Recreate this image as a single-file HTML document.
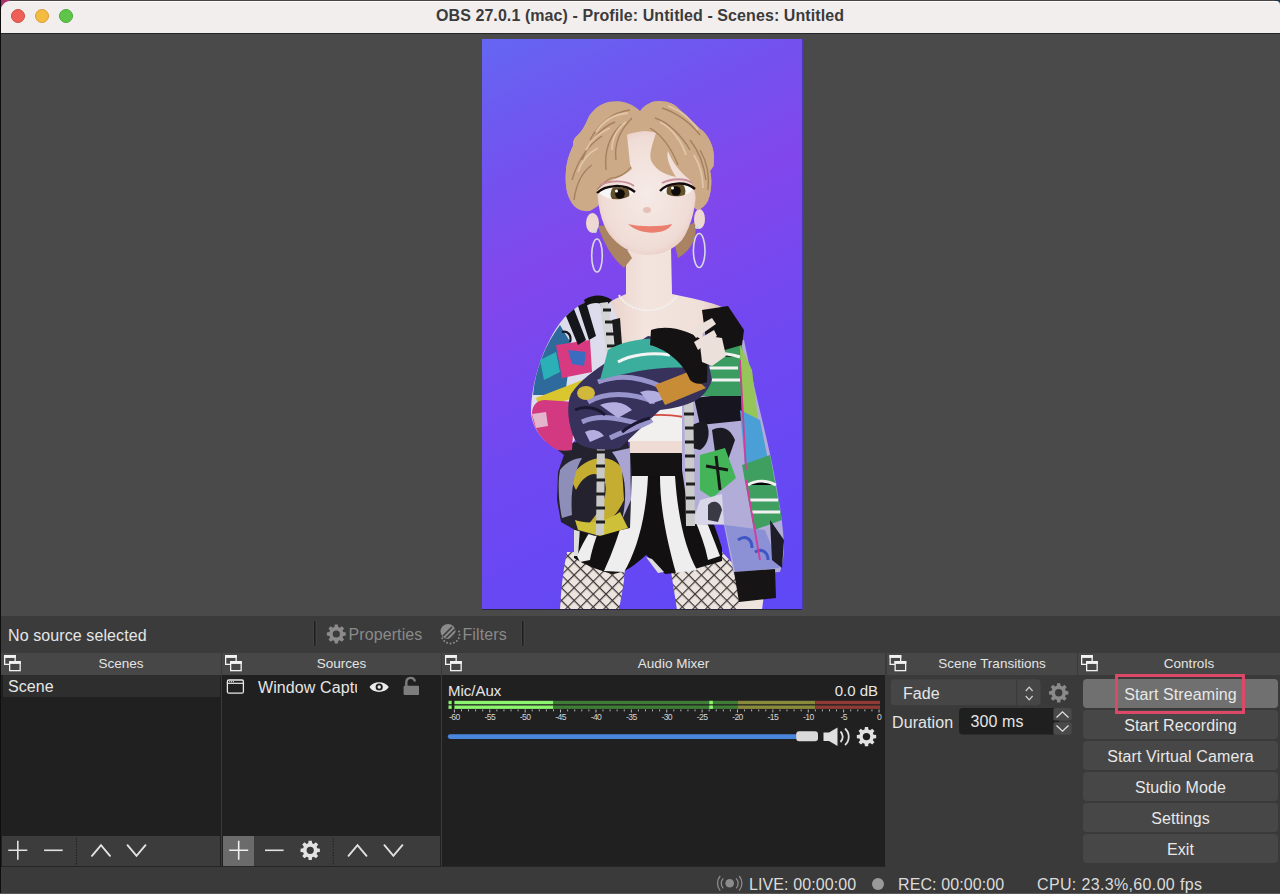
<!DOCTYPE html>
<html><head><meta charset="utf-8">
<style>
*{box-sizing:border-box;margin:0;padding:0}
html,body{width:1280px;height:894px;overflow:hidden;background:#3a3a3a}
body{position:relative;font-family:"Liberation Sans",sans-serif;color:#e6e6e6}
.a{position:absolute}
.t{position:absolute;white-space:nowrap;font-size:16px;letter-spacing:0.1px;line-height:1}
#titlebar{left:1px;top:1px;width:1279px;height:33px;background:#f3eeee;border-top:1px solid #fdfbfb;border-bottom:1px solid #262626;border-top-left-radius:9px;border-top-right-radius:4px}
#title{left:0;width:1280px;top:8px;text-align:center;font-weight:bold;color:#3b3b3b;font-size:16px;letter-spacing:0.08px}
.dot{position:absolute;width:14px;height:14px;border-radius:50%;top:9px}
#main{left:0;top:34px;width:1280px;height:582px;background:#4a4a4a}
#ctx{left:0;top:616px;width:1280px;height:37px;background:#3b3b3b}
.hdr{position:absolute;top:653px;height:22px;background:#474747}
.hdr .ht{position:absolute;left:20px;right:0;top:4px;text-align:center;font-size:13.5px;letter-spacing:0px;color:#e4e4e4;line-height:1}
.list{position:absolute;top:675px;background:#202020}
.tb{position:absolute;top:836px;height:30px;background:#3c3c3c}
.btn{position:absolute;left:1083px;width:195px;height:29px;border-radius:4px;background:#474747;text-align:center;font-size:16px;letter-spacing:0.1px;line-height:29px;padding-top:1px;color:#e8e8e8}
</style></head><body>
<div class="a" style="left:0;top:0;width:1280px;height:1px;background:#4a4646"></div>
<div class="a" style="left:0;top:0;width:10px;height:10px;background:#a8336a"></div>
<div class="a" style="left:1275px;top:0;width:5px;height:5px;background:#1d3a4a"></div>
<div id="titlebar" class="a"></div>
<div class="dot" style="left:11px;background:#ee5f57;border:0.5px solid #d24c44"></div>
<div class="dot" style="left:34.5px;background:#f3bb40;border:0.5px solid #d8a032"></div>
<div class="dot" style="left:58.5px;background:#5ec54a;border:0.5px solid #4aa83b"></div>
<div id="title" class="t">OBS 27.0.1 (mac) - Profile: Untitled - Scenes: Untitled</div>

<div id="main" class="a"></div>
<div id="preview"></div><svg class="a" style="left:482px;top:39px" width="321" height="571" viewBox="482 39 321 571">
<defs>
<linearGradient id="bg" x1="482" y1="39" x2="758" y2="631" gradientUnits="userSpaceOnUse">
<stop offset="0" stop-color="#6466f2"/>
<stop offset="0.2" stop-color="#7352ef"/>
<stop offset="0.36" stop-color="#8147ec"/>
<stop offset="0.6" stop-color="#7048f1"/>
<stop offset="1" stop-color="#5e48f6"/>
</linearGradient>
<pattern id="net" width="9" height="9" patternUnits="userSpaceOnUse" patternTransform="rotate(45) translate(2 0)">
<rect width="9" height="9" fill="#ece4df"/>
<path d="M0 0.6H9M0.6 0V9" stroke="#3e3636" stroke-width="1.2"/>
</pattern>
<radialGradient id="face" cx="0.5" cy="0.5" r="0.6">
<stop offset="0" stop-color="#f6ebe7"/><stop offset="0.75" stop-color="#f0dcd6"/><stop offset="1" stop-color="#e2c2b8"/>
</radialGradient>
<linearGradient id="neck" x1="0" y1="0" x2="1" y2="0">
<stop offset="0" stop-color="#e9d3cb"/><stop offset="0.3" stop-color="#f3e4de"/><stop offset="0.8" stop-color="#f1e0da"/><stop offset="1" stop-color="#dcc0b6"/>
</linearGradient>
<clipPath id="hc"><path d="M640 111 C645 104 652 101 660 101 C668 101 675 104 680 110 C688 116 696 126 703 131 C710 138 714 148 714 158 L713.5 166 L710 171 C712 178 712 190 708 201 C705 206 702 209 697 210 L697 260 L590 260 L590 211 C580 212 574 208 570 200 C566 192 565 182 566 170 C567 160 570 152 573 146 C573 141 574 138 577 136 C582 131 585 126 588 118 C592 110 600 104 608 102 C618 100 630 101 640 111Z"/></clipPath>
</defs>
<rect x="482" y="39" width="321" height="571" fill="url(#bg)"/>
<!-- legs -->
<path d="M567 552 L626 552 L624 580 C622 595 620 603 619 610 L560 610 C561 590 563 570 567 552Z" fill="url(#net)"/>
<path d="M668 552 L722 552 L734 565 L740 580 L745 610 L677 610 C674 590 671 572 668 552Z" fill="url(#net)"/>
<path d="M738 590 L764 594 L762 610 L740 610Z" fill="#eee4de"/>
<!-- shorts -->
<path d="M630 452 L681 452 L690 478 C705 500 715 525 722 548 L722 561 C700 568 680 573 665 574 C658 566 652 560 646 555 C635 565 625 573 612 574 C598 570 585 565 574 558 L574 523 C585 505 605 485 630 476Z" fill="#121010"/>
<path d="M631 476 L648 476 C646 520 636 552 624 572 L604 571 C616 545 628 510 631 476Z" fill="#eeeeee"/>
<path d="M660 476 L675 476 C678 520 686 550 697 570 L676 573 C668 545 660 510 660 476Z" fill="#eeeeee"/>
<path d="M595 525 L604 513 C599 530 592 548 590 560 L580 562 L577 556 C582 545 587 535 595 525Z" fill="#eeeeee"/>
<path d="M694 518 L706 520 C710 530 716 545 720 556 L708 560 C705 545 700 532 694 518Z" fill="#eeeeee"/>
<path d="M574 530 L580 528 L578 556 L574 556Z" fill="#dddddd"/>
<path d="M646 557 L652 559 L664 572 L658 573Z" fill="#dcdcdc"/>
<rect x="630" y="452" width="51" height="24" fill="#141212"/>
<!-- neck / chest skin -->
<path d="M626 250 L671 248 L672 294 C690 298 712 302 724 308 L720 345 L700 372 L650 372 L622 355 L610 302 C616 298 622 296 626 294Z" fill="url(#neck)"/>
<!-- crop top & midriff -->
<rect x="628" y="404" width="60" height="38" fill="#f2efef"/>
<path d="M640 418 C650 414 665 414 684 417" stroke="#d44a40" stroke-width="2" fill="none"/>
<rect x="630" y="441" width="56" height="12" fill="#eedcd4"/>
<!-- jacket left body lower -->
<path d="M553 446 L600 438 L628 440 L632 470 L630 528 L595 536 L575 530 L561 522 L557 500 L558 472 L564 455Z" fill="#24222e"/>
<path d="M570 478 C585 455 610 452 622 468 L624 500 C615 520 600 530 585 528 C600 512 610 495 604 480 C598 470 585 472 576 490Z" fill="#c4ad30"/>
<path d="M560 470 C566 462 575 458 582 458 C575 470 570 490 572 515 L562 518 C558 500 558 480 560 470Z" fill="#8d8fb8"/>
<path d="M612 452 L630 448 L631 500 L622 520 C628 495 626 470 612 452Z" fill="#a9a4d2"/>
<path d="M575 520 C590 525 605 522 620 512 L628 528 L600 536 L578 530Z" fill="#cfc03a"/>
<!-- jacket left sleeve -->
<path d="M589 301 L609 298 L622 330 L610 385 L575 440 C566 452 558 452 553 446 C540 440 532 425 531 413 C531 380 545 340 564 318 C572 310 580 304 589 301Z" fill="#dcdcec"/>
<path d="M533 395 C535 370 545 345 560 325 L572 345 L565 395 Z" fill="#2f6a9c"/>
<path d="M540 360 L556 352 L560 372 L544 380Z" fill="#2bb0b8"/>
<path d="M556 345 L590 340 L592 372 L562 378Z" fill="#d83a82"/>
<path d="M568 350 L586 352 L584 366 L572 364Z" fill="#3a6cc0"/>
<path d="M536 398 L590 377 L594 390 L540 410Z" fill="#d9c62e"/>
<path d="M532 412 C533 404 538 400 545 400 L575 402 L572 450 C562 452 556 450 551 446 C540 438 532 426 532 412Z" fill="#d23981"/>
<path d="M532 414 L546 412 L548 426 L536 428Z" fill="#e4b3cc"/>
<path d="M566 316 L574 309 L586 340 L578 345Z M578 306 L586 302 L596 336 L589 340Z M600 300 L606 299 L612 335 L605 337Z" fill="#15151c"/>
<path d="M562 332 C568 330 572 336 570 342" stroke="#15151c" stroke-width="2.2" fill="none"/>
<path d="M584 300 C592 294 604 294 612 300 L606 306 C600 302 592 302 586 306Z" fill="#141414"/>
<!-- drawstrings -->
<path d="M600 303 L608 302 L618 380 L610 382Z" fill="#d4d4d4"/>
<path d="M603 310 L611 310 M605 322 L613 322 M606 334 L614 334 M607 346 L615 346 M608 358 L616 358 M609 370 L617 370" stroke="#1e1e1e" stroke-width="3"/>
<path d="M612 320 L620 318 L622 345 L615 350Z" fill="#1a1a1a"/>
<path d="M597 440 L605 440 L604 535 L596 535Z" fill="#c9c9c9"/>
<path d="M596 452 H605 M596 466 H605 M596 480 H605 M596 494 H605 M596 508 H605 M596 522 H605" stroke="#1e1e1e" stroke-width="3"/>
<!-- jacket right -->
<path d="M703 330 L744 340 C750 370 760 410 768 445 C776 480 783 520 784 545 C784 558 782 566 780 572 L734 575 L724 525 L690 524 L682 470 L682 400 L700 372Z" fill="#b1acd8"/>
<path d="M694 398 L745 392 L748 420 L700 425Z" fill="#171520"/>
<path d="M698 345 L742 345 L746 396 L702 396Z" fill="#3b9c62"/>
<path d="M706 356 C716 352 728 353 740 357 M708 368 H738 M710 380 H740" stroke="#f2f2f2" stroke-width="3"/>
<path d="M692 425 L705 420 C712 432 708 445 700 450 L692 448Z" fill="#1b1a22"/>
<path d="M712 430 C722 425 730 428 735 440 L728 460 L715 452Z" fill="#1b1a22"/>
<path d="M700 455 L725 448 L736 478 L712 498 L700 490Z" fill="#43b558"/>
<path d="M706 466 L728 470 M716 456 L720 490" stroke="#171717" stroke-width="3"/>
<path d="M700 500 L722 494 L724 524 L692 524Z" fill="#d9d6e8"/>
<path d="M708 505 C712 500 720 500 722 510 L718 522 L708 520Z" fill="#3a3a44"/>
<path d="M740 345 L752 370 L758 420 L742 420Z" fill="#96c65a"/>
<path d="M740 410 L760 420 L768 460 L745 465Z" fill="#4aa0d6"/>
<path d="M742 465 L770 455 L782 520 L754 530Z" fill="#3e9f60"/>
<path d="M748 485 C756 480 766 480 776 485 M750 500 H778 M752 512 H780" stroke="#f2f2f2" stroke-width="2.8"/>
<path d="M725 525 L765 530 L780 568 L735 572Z" fill="#8c90d4"/>
<path d="M738 540 C745 535 752 538 752 548 M755 552 C762 548 768 552 768 560" stroke="#3f56c6" stroke-width="3" fill="none"/>
<path d="M770 520 L784 540 L782 568 L772 560Z" fill="#1e1c26"/>
<path d="M740 360 L746 470 M746 480 L760 560" stroke="#d33c9a" stroke-width="1.8"/>
<path d="M684 392 L693 392 L695 526 L686 526Z" fill="#cbcbcb"/>
<path d="M684 400 H694 M684 414 H694 M685 428 H695 M685 442 H695 M685 456 H695 M685 470 H695 M686 484 H695 M686 498 H695 M686 512 H695" stroke="#1e1e1e" stroke-width="3"/>
<!-- arm across (dark purple) -->
<path d="M571 394 C580 380 595 370 610 360 L648 336 L705 345 L712 380 C705 400 690 406 660 410 L620 448 C600 452 580 448 575 440 C568 425 566 405 571 394Z" fill="#37325c"/>
<path d="M588 402 C605 392 630 392 655 402 M582 422 C598 414 618 418 640 424 M598 382 C618 374 638 376 660 386 M610 438 C625 430 640 428 652 420" stroke="#9894cc" stroke-width="5" fill="none"/>
<path d="M600 405 C612 400 625 402 632 410 L618 418 Z M640 392 C650 388 662 392 668 398 L650 404Z M585 432 C592 428 600 430 604 436 L590 442Z" fill="#b2aee0"/>
<path d="M575 410 C585 405 598 408 605 415 M622 432 C632 424 642 420 650 418" stroke="#1a1830" stroke-width="3" fill="none"/>
<path d="M608 350 C628 338 660 335 690 343 L688 368 C660 366 630 372 600 380Z" fill="#3cae9e"/>
<path d="M618 362 C630 355 650 352 670 355" stroke="#f4f4f4" stroke-width="3" fill="none"/>
<path d="M655 385 L688 372 L706 388 L665 405Z" fill="#c88c36"/>
<ellipse cx="586" cy="393" rx="9" ry="7" fill="#d2b83a"/>
<!-- black cuff -->
<path d="M651 330 C668 324 690 330 708 344 L707 382 C700 385 694 384 690 380 C684 364 668 350 650 345Z" fill="#141212"/>
<!-- black strap right + hand -->
<path d="M702 310 L728 306 L744 330 L742 345 L718 352 L706 340Z" fill="#141212"/>
<path d="M700 345 L708 336 L722 338 L726 356 L712 366 L702 362Z" fill="#ece0da"/><path d="M690 330 L712 318 L716 324 L696 338Z M694 342 L714 330 L717 336 L698 350Z" fill="#ece0da"/>
<!-- bottom right cuff -->
<path d="M734 572 L775 569 L776 598 L739 602Z" fill="#161414"/>
<!-- hair back lower -->
<path d="M598 226 C604 244 612 258 624 268 L632 258 L612 225Z" fill="#a98362"/>
<path d="M672 234 L695 222 C698 236 692 250 678 258Z" fill="#a98362"/>
<!-- ears -->
<ellipse cx="592.5" cy="223" rx="6.5" ry="10" fill="#edd9d2"/>
<ellipse cx="699.5" cy="219" rx="5.5" ry="10" fill="#edd9d2"/>
<!-- hair blob -->
<path d="M640 111 C645 104 652 101 660 101 C668 101 675 104 680 110 C688 116 696 126 703 131 C710 138 714 148 714 158 L713.5 166 L710 171 C712 178 712 190 708 201 C705 206 702 209 697 210 L660 180 L620 170 L598 206 L590 211 C580 212 574 208 570 200 C566 192 565 182 566 170 C567 160 570 152 573 146 C573 141 574 138 577 136 C582 131 585 126 588 118 C592 110 600 104 608 102 C618 100 630 101 640 111Z" fill="#cca987"/>
<!-- face -->
<path d="M597 180 C598 150 620 132 645 131 C670 132 692 150 696 180 C697 205 692 225 682 240 C672 251 660 255 646 255 C632 254 618 246 609 234 C601 222 597 205 597 180Z" fill="url(#face)"/>
<g clip-path="url(#hc)">
<!-- bangs -->
<path d="M560 120 L627 130 L627 135 L630 164 L632 169 C625 175 618 178 612 180 C605 184 600 187 597 190 L580 205 L560 190Z" fill="#cca987"/>
<path d="M656 133 C652 145 649 155 651 160 C654 168 662 174 676 177 C669 166 666 157 668 151 C672 162 680 172 690 180 C694 188 696 195 696 200 L716 196 L716 110 L650 100Z" fill="#cca987"/>
<path d="M590 140 C598 125 612 112 630 110 M582 160 C590 140 600 128 615 122 M572 180 C578 160 588 145 602 136 M574 200 C576 185 582 172 592 165 M616 160 C614 145 620 130 632 118 M606 170 C604 150 610 135 622 124 M662 108 C675 112 690 122 700 135 M655 118 C668 122 682 136 690 150 M650 128 C662 135 672 150 678 165 M690 140 C698 150 704 165 706 180 M700 150 C706 160 710 172 708 190" stroke="#a5805f" stroke-width="1.4" fill="none"/>
<path d="M596 132 C604 120 615 114 628 113 M586 150 C592 138 600 132 610 128 M578 172 C582 160 590 152 598 148 M668 106 C680 110 692 120 698 130 M660 122 C672 128 682 142 686 155 M694 155 C700 165 703 175 703 188 M612 150 C612 138 618 128 626 122" stroke="#e0c6a6" stroke-width="1.8" fill="none"/>
<path d="M631 167 C626 174 618 178 611 178 C604 182 600 186 597 190" stroke="#a5805f" stroke-width="1.2" fill="none"/>
</g>
<!-- eyes -->
<clipPath id="e1"><path d="M599 193 C606 186 624 185 634 192 C626 201 610 202 599 193Z"/></clipPath>
<clipPath id="e2"><path d="M661 190 C669 183 686 182 693 189 C686 198 670 199 661 190Z"/></clipPath>
<path d="M599 193 C606 186 624 185 634 192 C626 201 610 202 599 193Z" fill="#f6f6f6"/>
<g clip-path="url(#e1)"><circle cx="620" cy="194" r="9.5" fill="#65502c"/><circle cx="620" cy="194" r="4.8" fill="#0e0b08"/></g>
<circle cx="616.5" cy="191" r="1.5" fill="#fff"/>
<path d="M597 193 C605 185 624 183 635 192" stroke="#140c0c" stroke-width="2.4" fill="none"/>
<path d="M661 190 C669 183 686 182 693 189 C686 198 670 199 661 190Z" fill="#f6f6f6"/>
<g clip-path="url(#e2)"><circle cx="676" cy="191" r="9.5" fill="#65502c"/><circle cx="676" cy="191" r="4.8" fill="#0e0b08"/></g>
<circle cx="672.5" cy="188" r="1.5" fill="#fff"/>
<path d="M660 191 C668 182 686 181 695 189" stroke="#140c0c" stroke-width="2.4" fill="none"/>
<path d="M600 185 C610 180 626 180 634 186 M662 183 C672 178 686 178 692 183" stroke="#c98e9c" stroke-width="1.8" fill="none"/>
<!-- nose mouth -->
<ellipse cx="647" cy="210" rx="4" ry="3" fill="#e6c0b6"/>
<path d="M628 224 C640 227 660 227 672 224 C667 235 640 236 628 224Z" fill="#ea7f70"/>
<!-- earrings -->
<ellipse cx="597" cy="255.5" rx="5.3" ry="16.5" stroke="#d8d8e2" stroke-width="1.6" fill="none"/>
<ellipse cx="699.2" cy="250.5" rx="5.8" ry="17" stroke="#d8d8e2" stroke-width="1.6" fill="none"/>
<circle cx="595" cy="231" r="2" fill="#cfe0dc"/><circle cx="697" cy="227" r="2" fill="#cfe0dc"/>
<!-- necklace -->
<path d="M619 295 C628 312 660 318 677 296" stroke="#f2f2f2" stroke-width="2" stroke-dasharray="2 1" fill="none"/>
<rect x="482" y="609" width="321" height="1.2" fill="#2a2640"/>
<rect x="802" y="39" width="1" height="571" fill="#4c3cb4"/>
</svg>



<div id="ctx" class="a"></div>
<div class="t" style="left:8px;top:628px;color:#e6e6e6">No source selected</div>
<div class="t" style="left:348.5px;top:627px;color:#8a8a8a">Properties</div>
<div class="t" style="left:462.5px;top:627px;color:#8a8a8a">Filters</div>

<!-- headers -->
<div class="hdr" style="left:1px;width:220px"><div class="ht">Scenes</div></div>
<div class="hdr" style="left:222px;width:219px"><div class="ht">Sources</div></div>
<div class="hdr" style="left:442px;width:443px"><div class="ht">Audio Mixer</div></div>
<div class="hdr" style="left:887px;width:190px"><div class="ht">Scene Transitions</div></div>
<div class="hdr" style="left:1078px;width:202px"><div class="ht">Controls</div></div>

<!-- lists -->
<div class="list" style="left:1px;width:220px;height:191px"></div>
<div class="a" style="left:3px;top:675px;width:217px;height:22px;background:#2e2e2e"></div>
<div class="t" style="left:8px;top:679px">Scene</div>
<div class="tb" style="left:2px;width:218px"></div>

<div class="list" style="left:222px;width:219px;height:191px"></div>
<div class="t" style="left:258px;top:680px;width:99px;overflow:hidden">Window Capture</div>
<div class="tb" style="left:223px;width:217px"></div>
<div class="a" style="left:223px;top:836px;width:31px;height:30px;background:#6b6b6b"></div>

<div class="list" style="left:442px;width:443px;height:191px"></div>
<div class="t" style="left:448px;top:683px;font-size:15px;letter-spacing:0px">Mic/Aux</div>
<div class="t" style="left:800px;width:78px;text-align:right;top:683px;font-size:15px;letter-spacing:0px">0.0 dB</div>

<div class="a" style="left:887px;top:675px;width:190px;height:191px;background:#3a3a3a"></div>
<div class="a" style="left:1078px;top:675px;width:202px;height:191px;background:#3a3a3a"></div>

<div class="btn" style="top:679px;background:#707070">Start Streaming</div>
<!--ST-->
<div class="btn" style="top:710px">Start Recording</div>
<div class="btn" style="top:741px">Start Virtual Camera</div>
<div class="btn" style="top:772px">Studio Mode</div>
<div class="btn" style="top:803px">Settings</div>
<div class="btn" style="top:834px">Exit</div>
<div class="a" style="left:1115px;top:674px;width:130px;height:40px;border:3px solid #db4868"></div>

<div class="a" style="left:1px;top:866px;width:885px;height:1px;background:#262626"></div>
<div class="a" style="left:0;top:0;width:1px;height:894px;background:#0e0e0e"></div>
<div class="a" style="left:0;top:893px;width:1280px;height:1px;background:#575757"></div>
<!-- status -->
<div class="t" style="left:749px;top:877px;color:#dcdcdc">LIVE: 00:00:00</div>
<div class="a" style="left:872px;top:878px;width:12px;height:12px;border-radius:50%;background:#9a9a9a"></div>
<div class="t" style="left:898px;top:877px;color:#dcdcdc;letter-spacing:0.1px">REC: 00:00:00</div>
<div class="t" style="left:1037px;top:877px;color:#dcdcdc;letter-spacing:0.35px">CPU: 23.3%,60.00 fps</div>
<svg class="a" style="left:0;top:0;pointer-events:none" width="1280" height="894" viewBox="0 0 1280 894">
<g fill="none" stroke="#f2f2f2" stroke-width="1.3"><rect x="4.65" y="655.65" width="10.5" height="8.7"/><rect x="4.65" y="655.65" width="10.5" height="1.6" fill="#f2f2f2"/><rect x="9.65" y="661.65" width="10.5" height="9" fill="#474747"/><rect x="9.65" y="661.65" width="10.5" height="1.6" fill="#f2f2f2"/></g>
<g fill="none" stroke="#f2f2f2" stroke-width="1.3"><rect x="225.65" y="655.65" width="10.5" height="8.7"/><rect x="225.65" y="655.65" width="10.5" height="1.6" fill="#f2f2f2"/><rect x="230.65" y="661.65" width="10.5" height="9" fill="#474747"/><rect x="230.65" y="661.65" width="10.5" height="1.6" fill="#f2f2f2"/></g>
<g fill="none" stroke="#f2f2f2" stroke-width="1.3"><rect x="445.65" y="655.65" width="10.5" height="8.7"/><rect x="445.65" y="655.65" width="10.5" height="1.6" fill="#f2f2f2"/><rect x="450.65" y="661.65" width="10.5" height="9" fill="#474747"/><rect x="450.65" y="661.65" width="10.5" height="1.6" fill="#f2f2f2"/></g>
<g fill="none" stroke="#f2f2f2" stroke-width="1.3"><rect x="890.15" y="655.65" width="10.5" height="8.7"/><rect x="890.15" y="655.65" width="10.5" height="1.6" fill="#f2f2f2"/><rect x="895.15" y="661.65" width="10.5" height="9" fill="#474747"/><rect x="895.15" y="661.65" width="10.5" height="1.6" fill="#f2f2f2"/></g>
<g fill="none" stroke="#f2f2f2" stroke-width="1.3"><rect x="1081.65" y="655.65" width="10.5" height="8.7"/><rect x="1081.65" y="655.65" width="10.5" height="1.6" fill="#f2f2f2"/><rect x="1086.65" y="661.65" width="10.5" height="9" fill="#474747"/><rect x="1086.65" y="661.65" width="10.5" height="1.6" fill="#f2f2f2"/></g>
<rect x="313.5" y="620.5" width="2.5" height="26" rx="1" fill="#1e1e1e" stroke="#545454" stroke-width="0.6"/>
<rect x="521.5" y="620.5" width="2.5" height="26" rx="1" fill="#1e1e1e" stroke="#545454" stroke-width="0.6"/>
<path d="M343.24 632.08 L345.77 632.45 L345.77 635.55 L343.24 635.92 L342.56 637.55 L344.09 639.60 L341.90 641.79 L339.85 640.26 L338.22 640.94 L337.85 643.47 L334.75 643.47 L334.38 640.94 L332.75 640.26 L330.70 641.79 L328.51 639.60 L330.04 637.55 L329.36 635.92 L326.83 635.55 L326.83 632.45 L329.36 632.08 L330.04 630.45 L328.51 628.40 L330.70 626.21 L332.75 627.74 L334.38 627.06 L334.75 624.53 L337.85 624.53 L338.22 627.06 L339.85 627.74 L341.90 626.21 L344.09 628.40 L342.56 630.45Z" fill="#8b8b8b"/><circle cx="336.3" cy="634" r="3.6" fill="#3b3b3b"/>
<g><circle cx="448" cy="631.5" r="7.5" fill="#8b8b8b"/><path d="M443 636 L452 627 M446 638 L455 629 M449 640 L457 632" stroke="#3b3b3b" stroke-width="1.6"/></g>
<circle cx="458.96" cy="631.42" r="1" fill="#8b8b8b"/>
<circle cx="459.49" cy="634.81" r="1" fill="#8b8b8b"/>
<circle cx="458.72" cy="638.16" r="1" fill="#8b8b8b"/>
<circle cx="456.75" cy="640.97" r="1" fill="#8b8b8b"/>
<circle cx="453.87" cy="642.84" r="1" fill="#8b8b8b"/>
<circle cx="450.50" cy="643.50" r="1" fill="#8b8b8b"/>
<circle cx="447.13" cy="642.84" r="1" fill="#8b8b8b"/>
<circle cx="444.25" cy="640.97" r="1" fill="#8b8b8b"/>
<circle cx="442.28" cy="638.16" r="1" fill="#8b8b8b"/>
<rect x="227.4" y="680" width="16" height="13.2" rx="1.5" fill="none" stroke="#e8e8e8" stroke-width="1.3"/><path d="M227.4 683.3 H243.4" stroke="#e8e8e8" stroke-width="1.2"/><circle cx="229.8" cy="681.7" r="0.6" fill="#e8e8e8"/><circle cx="231.6" cy="681.7" r="0.6" fill="#e8e8e8"/><circle cx="233.4" cy="681.7" r="0.6" fill="#e8e8e8"/>
<path d="M369.5 687 C373 680.5 385 680.5 388.8 687 C385 693.5 373 693.5 369.5 687Z" fill="#ececec"/><circle cx="379.2" cy="687" r="3.6" fill="#1e1e1e"/><circle cx="379.2" cy="687" r="1.7" fill="#ececec"/>
<rect x="403.6" y="685.7" width="15.4" height="9.3" rx="1" fill="#7d7d7d"/><path d="M406.3 686 V682.5 C406.3 676.5 414.8 676.5 414.8 681.5" fill="none" stroke="#7d7d7d" stroke-width="2.4"/>
<path d="M8.3 850.3 H27.3 M17.8 840.8 V859.8" stroke="#e2e2e2" stroke-width="1.6"/>
<path d="M44.099999999999994 850.3 H62.7" stroke="#e2e2e2" stroke-width="1.6"/>
<path d="M76.5 838 V865" stroke="#1a1a1a" stroke-width="1" stroke-dasharray="1.2 1.6"/>
<path d="M92 855.8 L101 845.2 L110 855.8" fill="none" stroke="#e2e2e2" stroke-width="1.9" stroke-linecap="round"/>
<path d="M127.5 845.2 L136.5 855.8 L145.5 845.2" fill="none" stroke="#e2e2e2" stroke-width="1.9" stroke-linecap="round"/>
<path d="M229.2 850.3 H248.2 M238.7 840.8 V859.8" stroke="#efefef" stroke-width="1.6"/>
<path d="M265.0 850.3 H283.6" stroke="#e2e2e2" stroke-width="1.6"/>
<path d="M317.24 848.35 L319.87 848.72 L319.87 851.88 L317.24 852.25 L316.55 853.90 L318.16 856.02 L315.92 858.26 L313.80 856.65 L312.15 857.34 L311.78 859.97 L308.62 859.97 L308.25 857.34 L306.60 856.65 L304.48 858.26 L302.24 856.02 L303.85 853.90 L303.16 852.25 L300.53 851.88 L300.53 848.72 L303.16 848.35 L303.85 846.70 L302.24 844.58 L304.48 842.34 L306.60 843.95 L308.25 843.26 L308.62 840.63 L311.78 840.63 L312.15 843.26 L313.80 843.95 L315.92 842.34 L318.16 844.58 L316.55 846.70Z" fill="#e2e2e2"/><circle cx="310.2" cy="850.3" r="3.6" fill="#3a3a3a"/>
<path d="M333.3 838 V865" stroke="#1a1a1a" stroke-width="1" stroke-dasharray="1.2 1.6"/>
<path d="M348.5 855.8 L357.5 845.2 L366.5 855.8" fill="none" stroke="#e2e2e2" stroke-width="1.9" stroke-linecap="round"/>
<path d="M384.4 845.2 L393.4 855.8 L402.4 845.2" fill="none" stroke="#e2e2e2" stroke-width="1.9" stroke-linecap="round"/>
<rect x="448.5" y="700.8" width="3.2" height="3.400000000000091" fill="#86f06a"/>
<rect x="454.4" y="700.8" width="99.07799999999997" height="3.400000000000091" fill="#8cf46e"/>
<rect x="553.478" y="700.8" width="184.00200000000007" height="3.400000000000091" fill="#3f7c35"/>
<rect x="737.48" y="700.8" width="77.84699999999998" height="3.400000000000091" fill="#8a8a3c"/>
<rect x="815.327" y="700.8" width="64.69299999999998" height="3.400000000000091" fill="#8d3b34"/>
<rect x="709.3" y="700.8" width="3.6" height="3.400000000000091" fill="#8cf46e"/>
<rect x="448.5" y="705.5" width="3.2" height="3.3999999999999773" fill="#86f06a"/>
<rect x="454.4" y="705.5" width="99.07799999999997" height="3.3999999999999773" fill="#8cf46e"/>
<rect x="553.478" y="705.5" width="184.00200000000007" height="3.3999999999999773" fill="#3f7c35"/>
<rect x="737.48" y="705.5" width="77.84699999999998" height="3.3999999999999773" fill="#8a8a3c"/>
<rect x="815.327" y="705.5" width="64.69299999999998" height="3.3999999999999773" fill="#8d3b34"/>
<rect x="709.3" y="705.5" width="3.6" height="3.3999999999999773" fill="#8cf46e"/>
<path d="M454.40 709.5 V712.5 M461.48 709.5 V711.3 M468.55 709.5 V711.3 M475.63 709.5 V711.3 M482.71 709.5 V711.3 M489.78 709.5 V712.5 M496.86 709.5 V711.3 M503.94 709.5 V711.3 M511.02 709.5 V711.3 M518.09 709.5 V711.3 M525.17 709.5 V712.5 M532.25 709.5 V711.3 M539.32 709.5 V711.3 M546.40 709.5 V711.3 M553.48 709.5 V711.3 M560.55 709.5 V712.5 M567.63 709.5 V711.3 M574.71 709.5 V711.3 M581.79 709.5 V711.3 M588.86 709.5 V711.3 M595.94 709.5 V712.5 M603.02 709.5 V711.3 M610.09 709.5 V711.3 M617.17 709.5 V711.3 M624.25 709.5 V711.3 M631.33 709.5 V712.5 M638.40 709.5 V711.3 M645.48 709.5 V711.3 M652.56 709.5 V711.3 M659.63 709.5 V711.3 M666.71 709.5 V712.5 M673.79 709.5 V711.3 M680.86 709.5 V711.3 M687.94 709.5 V711.3 M695.02 709.5 V711.3 M702.10 709.5 V712.5 M709.17 709.5 V711.3 M716.25 709.5 V711.3 M723.33 709.5 V711.3 M730.40 709.5 V711.3 M737.48 709.5 V712.5 M744.56 709.5 V711.3 M751.63 709.5 V711.3 M758.71 709.5 V711.3 M765.79 709.5 V711.3 M772.87 709.5 V712.5 M779.94 709.5 V711.3 M787.02 709.5 V711.3 M794.10 709.5 V711.3 M801.17 709.5 V711.3 M808.25 709.5 V712.5 M815.33 709.5 V711.3 M822.40 709.5 V711.3 M829.48 709.5 V711.3 M836.56 709.5 V711.3 M843.63 709.5 V712.5 M850.71 709.5 V711.3 M857.79 709.5 V711.3 M864.87 709.5 V711.3 M871.94 709.5 V711.3 M879.02 709.5 V712.5" stroke="#cfcfcf" stroke-width="0.9"/>
<text x="454.40" y="719.6" text-anchor="middle" font-family="Liberation Sans" font-size="8.6" letter-spacing="-0.6" fill="#d6d6d6">-60</text>
<text x="489.78" y="719.6" text-anchor="middle" font-family="Liberation Sans" font-size="8.6" letter-spacing="-0.6" fill="#d6d6d6">-55</text>
<text x="525.17" y="719.6" text-anchor="middle" font-family="Liberation Sans" font-size="8.6" letter-spacing="-0.6" fill="#d6d6d6">-50</text>
<text x="560.55" y="719.6" text-anchor="middle" font-family="Liberation Sans" font-size="8.6" letter-spacing="-0.6" fill="#d6d6d6">-45</text>
<text x="595.94" y="719.6" text-anchor="middle" font-family="Liberation Sans" font-size="8.6" letter-spacing="-0.6" fill="#d6d6d6">-40</text>
<text x="631.33" y="719.6" text-anchor="middle" font-family="Liberation Sans" font-size="8.6" letter-spacing="-0.6" fill="#d6d6d6">-35</text>
<text x="666.71" y="719.6" text-anchor="middle" font-family="Liberation Sans" font-size="8.6" letter-spacing="-0.6" fill="#d6d6d6">-30</text>
<text x="702.10" y="719.6" text-anchor="middle" font-family="Liberation Sans" font-size="8.6" letter-spacing="-0.6" fill="#d6d6d6">-25</text>
<text x="737.48" y="719.6" text-anchor="middle" font-family="Liberation Sans" font-size="8.6" letter-spacing="-0.6" fill="#d6d6d6">-20</text>
<text x="772.87" y="719.6" text-anchor="middle" font-family="Liberation Sans" font-size="8.6" letter-spacing="-0.6" fill="#d6d6d6">-15</text>
<text x="808.25" y="719.6" text-anchor="middle" font-family="Liberation Sans" font-size="8.6" letter-spacing="-0.6" fill="#d6d6d6">-10</text>
<text x="843.63" y="719.6" text-anchor="middle" font-family="Liberation Sans" font-size="8.6" letter-spacing="-0.6" fill="#d6d6d6">-5</text>
<text x="879.02" y="719.6" text-anchor="middle" font-family="Liberation Sans" font-size="8.6" letter-spacing="-0.6" fill="#d6d6d6">0</text>
<rect x="447.8" y="734.2" width="350" height="4.8" rx="2.4" fill="#4a86dc"/>
<rect x="796.2" y="731.2" width="21.8" height="10" rx="3" fill="#dadada"/>
<path d="M823.5 732.5 H829 L837.5 727.5 V746 L829 741 H823.5Z" fill="#e0e0e0"/><path d="M840.5 731.5 C843.5 734.5 843.5 739 840.5 742" fill="none" stroke="#e0e0e0" stroke-width="1.8"/><path d="M845 728.5 C850 733 850 740.5 845 745" fill="none" stroke="#e0e0e0" stroke-width="1.8"/>
<path d="M873.54 734.65 L876.17 735.02 L876.17 738.18 L873.54 738.55 L872.85 740.20 L874.46 742.32 L872.22 744.56 L870.10 742.95 L868.45 743.64 L868.08 746.27 L864.92 746.27 L864.55 743.64 L862.90 742.95 L860.78 744.56 L858.54 742.32 L860.15 740.20 L859.46 738.55 L856.83 738.18 L856.83 735.02 L859.46 734.65 L860.15 733.00 L858.54 730.88 L860.78 728.64 L862.90 730.25 L864.55 729.56 L864.92 726.93 L868.08 726.93 L868.45 729.56 L870.10 730.25 L872.22 728.64 L874.46 730.88 L872.85 733.00Z" fill="#e2e2e2"/><circle cx="866.5" cy="736.6" r="3.7" fill="#1e1e1e"/>
<rect x="890.8" y="679.2" width="149.7" height="26.1" rx="4" fill="#464646"/>
<rect x="1016.2" y="679.2" width="1" height="26.1" fill="#3a3a3a"/>
<path d="M1025.8 691 L1029.2 687.2 L1032.6 691 M1025.8 696 L1029.2 699.8 L1032.6 696" fill="none" stroke="#d4d4d4" stroke-width="1.2"/>
<path d="M1065.74 690.85 L1068.37 691.22 L1068.37 694.38 L1065.74 694.75 L1065.05 696.40 L1066.66 698.52 L1064.42 700.76 L1062.30 699.15 L1060.65 699.84 L1060.28 702.47 L1057.12 702.47 L1056.75 699.84 L1055.10 699.15 L1052.98 700.76 L1050.74 698.52 L1052.35 696.40 L1051.66 694.75 L1049.03 694.38 L1049.03 691.22 L1051.66 690.85 L1052.35 689.20 L1050.74 687.08 L1052.98 684.84 L1055.10 686.45 L1056.75 685.76 L1057.12 683.13 L1060.28 683.13 L1060.65 685.76 L1062.30 686.45 L1064.42 684.84 L1066.66 687.08 L1065.05 689.20Z" fill="#8a8a8a"/><circle cx="1058.7" cy="692.8" r="3.7" fill="#3a3a3a"/>
<rect x="959" y="708" width="100" height="26.4" rx="4" fill="#1f1f1f"/>
<rect x="1053.4" y="708" width="18.2" height="12.6" rx="2" fill="#4a4a4a"/>
<rect x="1053.4" y="722.3" width="18.2" height="12.5" rx="2" fill="#4a4a4a"/>
<path d="M1056.5 717.5 L1062.5 711.8 L1068.5 717.5 M1056.5 725.5 L1062.5 731.2 L1068.5 725.5" fill="none" stroke="#e0e0e0" stroke-width="1.3"/>
<circle cx="729.7" cy="883.3" r="4.3" fill="#8c8c8c"/><path d="M723.2 878.3 C720.8 881.3 720.8 885.3 723.2 888.3 M736.2 878.3 C738.6 881.3 738.6 885.3 736.2 888.3" fill="none" stroke="#8c8c8c" stroke-width="1.3"/><path d="M720.2 876 C716.6 880.3 716.6 886.3 720.2 890.6 M739.2 876 C742.8 880.3 742.8 886.3 739.2 890.6" fill="none" stroke="#8c8c8c" stroke-width="1.3"/>
</svg>
<div class="t" style="left:903px;top:686px">Fade</div>
<div class="t" style="left:892px;top:715px">Duration</div>
<div class="t" style="left:970.5px;top:713.5px">300 ms</div>
</body></html>
